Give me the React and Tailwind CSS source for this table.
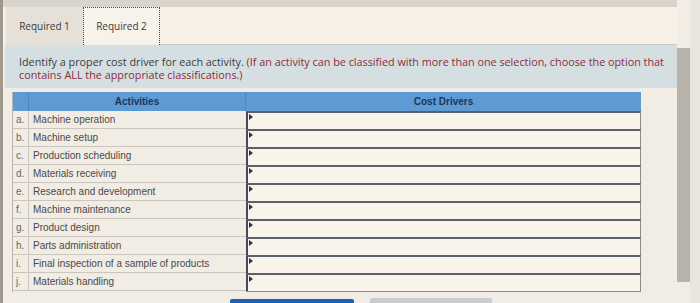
import React from "react";

const activities = [
  ["a.", "Machine operation"],
  ["b.", "Machine setup"],
  ["c.", "Production scheduling"],
  ["d.", "Materials receiving"],
  ["e.", "Research and development"],
  ["f.", "Machine maintenance"],
  ["g.", "Product design"],
  ["h.", "Parts administration"],
  ["i.", "Final inspection of a sample of products"],
  ["j.", "Materials handling"],
];

const DriverSelect = () => (
  <div className="h-full w-full border-l-2 border-t-2 border-r border-l-[#454b58] border-t-[#5a606c] border-r-[#8d8c89] bg-[#f8f3eb] flex items-start">
    <span className="mt-[1px] ml-[1px] w-0 h-0 border-y-[3px] border-y-transparent border-l-[4px] border-l-[#2d3446]" />
  </div>
);

const App = () => {
  return (
    <div className="w-[700px] h-[303px] overflow-hidden flex bg-[#f1ece4] font-['Liberation_Sans',Arial,sans-serif]">
      <div className="w-[3px] shrink-0 bg-[#9e988f]" />

      <div className="w-[674px] shrink-0 flex flex-col">
        <div className="h-[7px] shrink-0 bg-[#d8d3cb]" />

        {/* tabs */}
        <div className="h-[38px] shrink-0 flex pl-[2px] bg-[#f6f0e7] font-['Open_Sans',sans-serif] text-[10px] text-[#3a3a3a]">
          <div className="w-[78px] bg-[#e5e0d8] border-l border-[#f3efe8] flex items-center justify-center">
            Required 1
          </div>
          <div className="w-[77px] border border-dotted border-[#4a4a4a] border-b-0 bg-[#f7f2ea] flex items-center justify-center">
            Required 2
          </div>
          <div className="flex-1 border-b border-[#cfcac2]" />
        </div>

        {/* instructions */}
        <div className="shrink-0 ml-[2px] h-[43px] bg-[#d5dfe1] pl-[14px] pt-[10px] font-['Open_Sans',sans-serif] text-[10.8px] leading-[13px] text-[#3b3b3b]">
          <p>
            Identify a proper cost driver for each activity.{" "}
            <span className="text-[#8c2b3e]">
              (If an activity can be classified with more than one selection, choose the option that contains ALL the appropriate classifications.)
            </span>
          </p>
        </div>

        {/* table */}
        <div className="shrink-0 pl-[9px] pt-[4px]">
          <div className="w-[629px] border-l border-[#b9b4ab] text-[10px]">
            <div className="h-[19px] flex bg-[#5e9ad3] text-[#1d3563] font-semibold">
              <div className="w-[16px] border-r border-[#4f88c0]" />
              <div className="w-[217px] border-r border-[#4f88c0] flex items-center justify-center">
                Activities
              </div>
              <div className="flex-1 flex items-center justify-center">
                Cost Drivers
              </div>
            </div>
            {activities.map(([letter, name]) => (
              <div key={letter} className="h-[18px] flex text-[#4a4a4a]">
                <div className="w-[16px] border-r border-b border-[#cbc6bd] pl-[3px] flex items-center text-[#666]">
                  {letter}
                </div>
                <div className="w-[217px] border-b border-[#cbc6bd] pl-[4px] flex items-center">
                  {name}
                </div>
                <div className="flex-1">
                  <DriverSelect />
                </div>
              </div>
            ))}
            <div className="h-[1px] ml-[233px] bg-[#8d8c89]" />
          </div>
        </div>

        {/* buttons */}
        <div className="shrink-0 flex items-start pl-[227px] pt-[6px] gap-[16px]">
          <div className="w-[124px] h-[10px] mt-[1px] bg-[#1a62b8] rounded-t-[2px]" />
          <div className="w-[122px] h-[10px] bg-[#c9ccd0] rounded-t-[2px]" />
        </div>
      </div>

      {/* scrollbar */}
      <div className="w-[13px] shrink-0 pt-[48px]">
        <div className="h-[234px] bg-[#b7b2aa]" />
      </div>
      <div className="flex-1 bg-[#e9e5de]" />
    </div>
  );
};

export default App;
